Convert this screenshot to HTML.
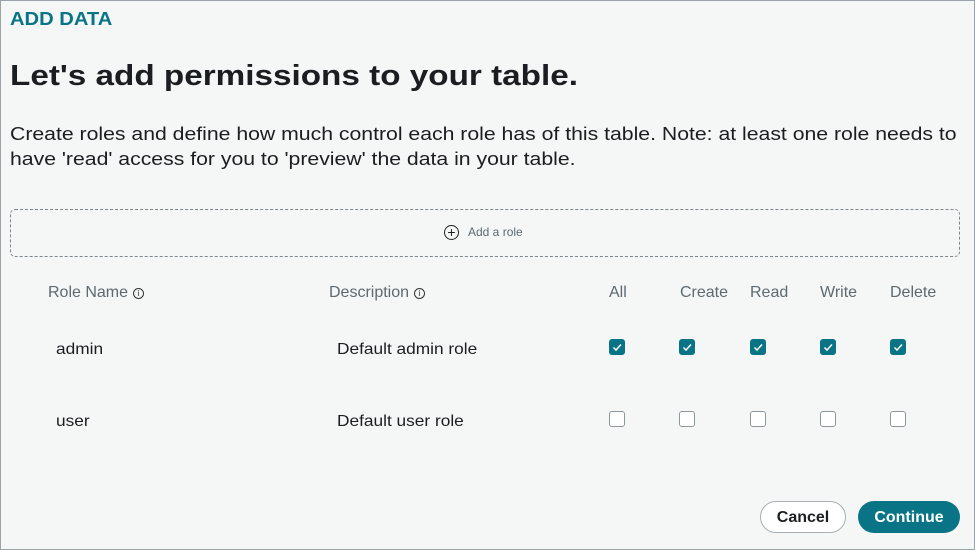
<!DOCTYPE html>
<html><head><style>
*{margin:0;padding:0;box-sizing:border-box}
body{width:975px;height:550px;background:#f5f6f6;font-family:"Liberation Sans",sans-serif;color:#1b1e20;position:relative;overflow:hidden}
.frame{position:absolute;left:0;top:0;width:975px;height:550px;border:1px solid #9aa2a8;pointer-events:none}
.a{position:absolute;white-space:nowrap}
.sx{transform-origin:0 0}
.cb{position:absolute;width:16px;height:16px;border-radius:3px;border:1.5px solid #8c979c;background:#fff}
.cb.on{background:#087485;border-color:#087485}
.cb.on svg{position:absolute;left:1px;top:1px}
.hd{color:#5d6a70;font-size:16px}
.i{display:inline-block;width:11px;height:11px;border:1px solid #333;border-radius:50%;font-size:8px;line-height:9px;text-align:center;font-weight:bold;vertical-align:1px;margin-left:5px}
</style></head><body>
<div class="frame"></div>
<div class="a sx" style="left:10px;top:9px;font-size:18px;font-weight:bold;color:#087485;transform:scaleX(1.12)">ADD DATA</div>
<div class="a sx" style="left:10px;top:60px;font-size:29px;font-weight:bold;color:#1b1e20;transform:scaleX(1.147)">Let's add permissions to your table.</div>
<div class="a sx" style="left:10px;top:121px;font-size:18.3px;line-height:25px;color:#1b1e20;transform:scaleX(1.16)">Create roles and define how much control each role has of this table. Note: at least one role needs to<br>have 'read' access for you to 'preview' the data in your table.</div>
<div class="a" style="left:10px;top:209px;width:950px;height:48px;border:1px dashed #7d878b;border-radius:5px"></div>
<div class="a" style="left:444px;top:225px;width:15px;height:15px;border:1.3px solid #222;border-radius:50%;font-size:14px;line-height:12px;text-align:center">+</div>
<div class="a" style="left:468px;top:225px;font-size:12px;color:#5d6a70">Add a role</div>
<div class="a hd" style="left:48px;top:284px">Role Name<span class="i">i</span></div>
<div class="a hd" style="left:329px;top:284px">Description<span class="i">i</span></div>
<div class="a hd" style="left:609px;top:284px">All</div>
<div class="a hd" style="left:680px;top:284px">Create</div>
<div class="a hd" style="left:750px;top:284px">Read</div>
<div class="a hd" style="left:820px;top:284px">Write</div>
<div class="a hd" style="left:890px;top:284px">Delete</div>
<div class="a sx" style="left:56px;top:341px;font-size:16px;transform:scaleX(1.08)">admin</div>
<div class="a sx" style="left:337px;top:341px;font-size:16px;transform:scaleX(1.08)">Default admin role</div>
<div class="a sx" style="left:56px;top:413px;font-size:16px;transform:scaleX(1.08)">user</div>
<div class="a sx" style="left:337px;top:413px;font-size:16px;transform:scaleX(1.08)">Default user role</div>
<div class="cb on" style="left:609px;top:339px"><svg width="12" height="12"><path d="M2.5 6.5l2.5 2.5 5-5.5" stroke="#fff" stroke-width="1.5" fill="none"/></svg></div>
<div class="cb on" style="left:679px;top:339px"><svg width="12" height="12"><path d="M2.5 6.5l2.5 2.5 5-5.5" stroke="#fff" stroke-width="1.5" fill="none"/></svg></div>
<div class="cb on" style="left:750px;top:339px"><svg width="12" height="12"><path d="M2.5 6.5l2.5 2.5 5-5.5" stroke="#fff" stroke-width="1.5" fill="none"/></svg></div>
<div class="cb on" style="left:820px;top:339px"><svg width="12" height="12"><path d="M2.5 6.5l2.5 2.5 5-5.5" stroke="#fff" stroke-width="1.5" fill="none"/></svg></div>
<div class="cb on" style="left:890px;top:339px"><svg width="12" height="12"><path d="M2.5 6.5l2.5 2.5 5-5.5" stroke="#fff" stroke-width="1.5" fill="none"/></svg></div>
<div class="cb" style="left:609px;top:411px"></div>
<div class="cb" style="left:679px;top:411px"></div>
<div class="cb" style="left:750px;top:411px"></div>
<div class="cb" style="left:820px;top:411px"></div>
<div class="cb" style="left:890px;top:411px"></div>
<div class="a" style="left:760px;top:501px;width:86px;height:32px;border:1px solid #a9b0b3;border-radius:16px;background:#fff;font-size:16px;font-weight:bold;text-align:center;line-height:31px">Cancel</div>
<div class="a" style="left:858px;top:501px;width:102px;height:32px;border-radius:16px;background:#087485;color:#fff;font-size:16px;font-weight:bold;text-align:center;line-height:33px">Continue</div>
</body></html>
